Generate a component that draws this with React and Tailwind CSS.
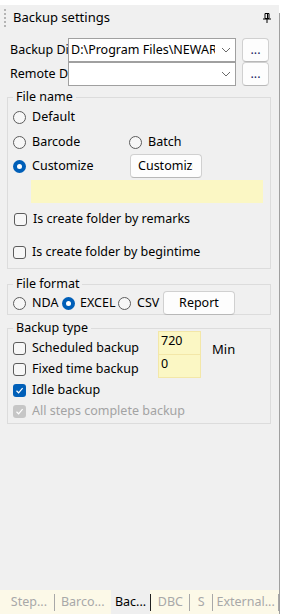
import React from 'react';

const font = { fontFamily: '"Noto Sans", "Liberation Sans", sans-serif' };

function Radio({ checked }) {
  if (checked) {
    return (
      <span className="flex h-[13px] w-[13px] shrink-0 items-center justify-center rounded-full bg-[#005fb8]">
        <span className="h-[5px] w-[5px] rounded-full bg-white" />
      </span>
    );
  }
  return <span className="h-[13px] w-[13px] shrink-0 rounded-full border border-[#5c5c5c] bg-[#f7f7f7]" />;
}

function Check({ checked, disabled }) {
  if (checked) {
    return (
      <span
        className={
          'flex h-[13px] w-[13px] shrink-0 items-center justify-center rounded-[3px] ' +
          (disabled ? 'bg-[#c6c6c6]' : 'bg-[#005fb8]')
        }
      >
        <svg width="9" height="9" viewBox="0 0 9 9" fill="none">
          <path d="M1.5 4.8 L3.6 6.8 L7.6 2.2" stroke="white" strokeWidth="1.2" />
        </svg>
      </span>
    );
  }
  return <span className="h-[13px] w-[13px] shrink-0 rounded-[3px] border border-[#5c5c5c] bg-[#f7f7f7]" />;
}

function Combo({ value }) {
  return (
    <div className="flex h-[24px] w-[168px] shrink-0 items-center border border-[#a0a0a0] bg-white">
      <span className="min-w-0 flex-1 overflow-hidden whitespace-nowrap pl-[2px]">{value}</span>
      <svg className="ml-[6px] mr-[4px] shrink-0" width="10" height="6" viewBox="0 0 10 6" fill="none">
        <path d="M1 1 L5 5 L9 1" stroke="#6a6a6a" strokeWidth="1" />
      </svg>
    </div>
  );
}

function DotsButton() {
  return (
    <button className="ml-[6px] flex h-[24px] w-[27px] shrink-0 items-center justify-center rounded-[4px] border border-[#d0d0d0] border-b-[#b8b8b8] bg-[#fdfdfd] text-[#1c2060] leading-none">
      ...
    </button>
  );
}

function Group({ title, className, children }) {
  return (
    <fieldset className={'ml-[7px] w-[264px] border border-[#dcdcdc] ' + className}>
      <legend className="ml-[5px] px-[3px] leading-[16px]">{title}</legend>
      {children}
    </fieldset>
  );
}

const tabs = [
  { label: 'Step...', w: 'w-[50px]' },
  { label: 'Barco...', w: 'w-[56px]' },
  { label: 'Bac...', w: 'w-[40px]', active: true },
  { label: 'DBC', w: 'w-[38px]' },
  { label: 'S', w: 'w-[22px]' },
  { label: 'External...', w: 'w-[65px]' },
];

export default function App() {
  return (
    <div className="flex h-[614px] w-[283px] flex-col bg-white pt-[5px] text-[12.5px] text-black" style={font}>
      <div className="flex flex-1">
        <div className="flex w-[279px] flex-col bg-[#f0f0f0]">
          {/* header */}
          <div className="flex h-[26px] items-center">
            <div className="ml-[4px] flex flex-col gap-[2px]">
              {[0, 1, 2, 3, 4].map((i) => (
                <span key={i} className="h-[2px] w-[2px] bg-[#b4b4b4]" />
              ))}
            </div>
            <span className="ml-[7px] text-[13px]">Backup settings</span>
            <svg className="ml-auto mr-[8px]" width="8" height="10" viewBox="0 0 8 10" fill="none">
              <path d="M2 0.5 H6 V5.5 H2 Z" stroke="black" strokeWidth="1" />
              <path d="M4.5 1 V5" stroke="black" strokeWidth="1" />
              <path d="M0 6 H8" stroke="black" strokeWidth="1" />
              <path d="M4 6 V10" stroke="black" strokeWidth="1" />
            </svg>
          </div>

          {/* directories */}
          <div className="mt-[7px] flex h-[24px] items-center">
            <span className="w-[68px] shrink-0 overflow-hidden whitespace-nowrap pl-[10px]">Backup Directory</span>
            <Combo value="D:\Program Files\NEWARE\BTS" />
            <DotsButton />
          </div>
          <div className="flex h-[24px] items-center">
            <span className="w-[68px] shrink-0 overflow-hidden whitespace-nowrap pl-[10px]">Remote Directory</span>
            <Combo value="" />
            <DotsButton />
          </div>

          {/* file name */}
          <Group title="File name" className="mt-[3px] pb-[4px]">
            <div className="flex h-[24px] items-center pl-[5px]">
              <Radio />
              <span className="ml-[6px]">Default</span>
            </div>
            <div className="mt-[1px] flex h-[24px] items-center pl-[5px]">
              <div className="flex w-[116px] items-center">
                <Radio />
                <span className="ml-[6px]">Barcode</span>
              </div>
              <Radio />
              <span className="ml-[6px]">Batch</span>
            </div>
            <div className="flex h-[24px] items-center pl-[5px]">
              <div className="flex w-[117px] items-center">
                <Radio checked />
                <span className="ml-[6px]">Customize</span>
              </div>
              <button className="flex h-[24px] w-[72px] items-center rounded-[4px] border border-[#d0d0d0] border-b-[#b8b8b8] bg-[#fdfdfd] pl-[7px]">
                <span className="w-[55px] overflow-hidden whitespace-nowrap text-left">Customize</span>
              </button>
            </div>
            <div className="ml-[23px] mt-[2px] h-[23px] w-[232px] bg-[#fbf7c4]" />
            <div className="mt-[4px] flex h-[24px] items-center pl-[6px]">
              <Check />
              <span className="ml-[6px]">Is create folder by remarks</span>
            </div>
            <div className="mt-[9px] flex h-[24px] items-center pl-[5px]">
              <Check />
              <span className="ml-[6px]">Is create folder by begintime</span>
            </div>
          </Group>

          {/* file format */}
          <Group title="File format" className="mt-[7px]">
            <div className="flex h-[22px] items-center pl-[5px]">
              <div className="flex w-[49px] items-center">
                <Radio />
                <span className="ml-[6px]">NDA</span>
              </div>
              <div className="flex w-[56px] items-center">
                <Radio checked />
                <span className="ml-[5px]">EXCEL</span>
              </div>
              <div className="flex w-[45px] items-center">
                <Radio />
                <span className="ml-[6px]">CSV</span>
              </div>
              <button className="h-[24px] w-[72px] shrink-0 rounded-[4px] border border-[#d0d0d0] border-b-[#b8b8b8] bg-[#fdfdfd]">
                Report
              </button>
            </div>
          </Group>

          {/* backup type */}
          <Group title="Backup type" className="mt-[5px] pb-[1px]">
            <div className="flex items-start">
              <div className="mt-[2px] flex w-[150px] flex-col pl-[5px]">
                <div className="flex h-[21px] items-center">
                  <Check />
                  <span className="ml-[6px]">Scheduled backup</span>
                </div>
                <div className="flex h-[21px] items-center">
                  <Check />
                  <span className="ml-[6px]">Fixed time backup</span>
                </div>
              </div>
              <div className="-mt-[5px] flex w-[43px] flex-col">
                <div className="h-[24px] border border-[#f3e7a8] bg-[#fbf7c4] pl-[2px] leading-[18px]">720</div>
                <div className="h-[23px] border border-t-0 border-[#f3e7a8] bg-[#fbf7c4] pl-[2px] leading-[18px]">0</div>
              </div>
              <span className="ml-[11px] mt-[3px] text-[13px] leading-[21px]">Min</span>
            </div>
            <div className="flex h-[21px] items-center pl-[5px]">
              <Check checked />
              <span className="ml-[6px]">Idle backup</span>
            </div>
            <div className="flex h-[21px] items-center pl-[5px]">
              <Check checked disabled />
              <span className="ml-[6px] text-[#a3a3a3]">All steps complete backup</span>
            </div>
          </Group>

          <div className="flex-1" />

          {/* tabs */}
          <div className="flex h-[24px] items-center bg-[#fcf9e8] pl-[4px] text-[12.5px]">
            {tabs.map((t, i) => (
              <React.Fragment key={t.label}>
                <div
                  className={
                    'flex h-[24px] items-center justify-center whitespace-nowrap ' +
                    t.w +
                    (t.active ? ' bg-[#efefef] text-black' : ' text-[#a8a8a8]')
                  }
                >
                  {t.label}
                </div>
                {i !== 1 && (
                  <span className={'h-[17px] w-px ' + (t.active ? 'bg-[#202020]' : 'bg-[#a8a8a8]')} />
                )}
              </React.Fragment>
            ))}
          </div>
        </div>
        <div className="mt-[8px] w-px bg-[#a0a0a0]" />
      </div>
    </div>
  );
}
